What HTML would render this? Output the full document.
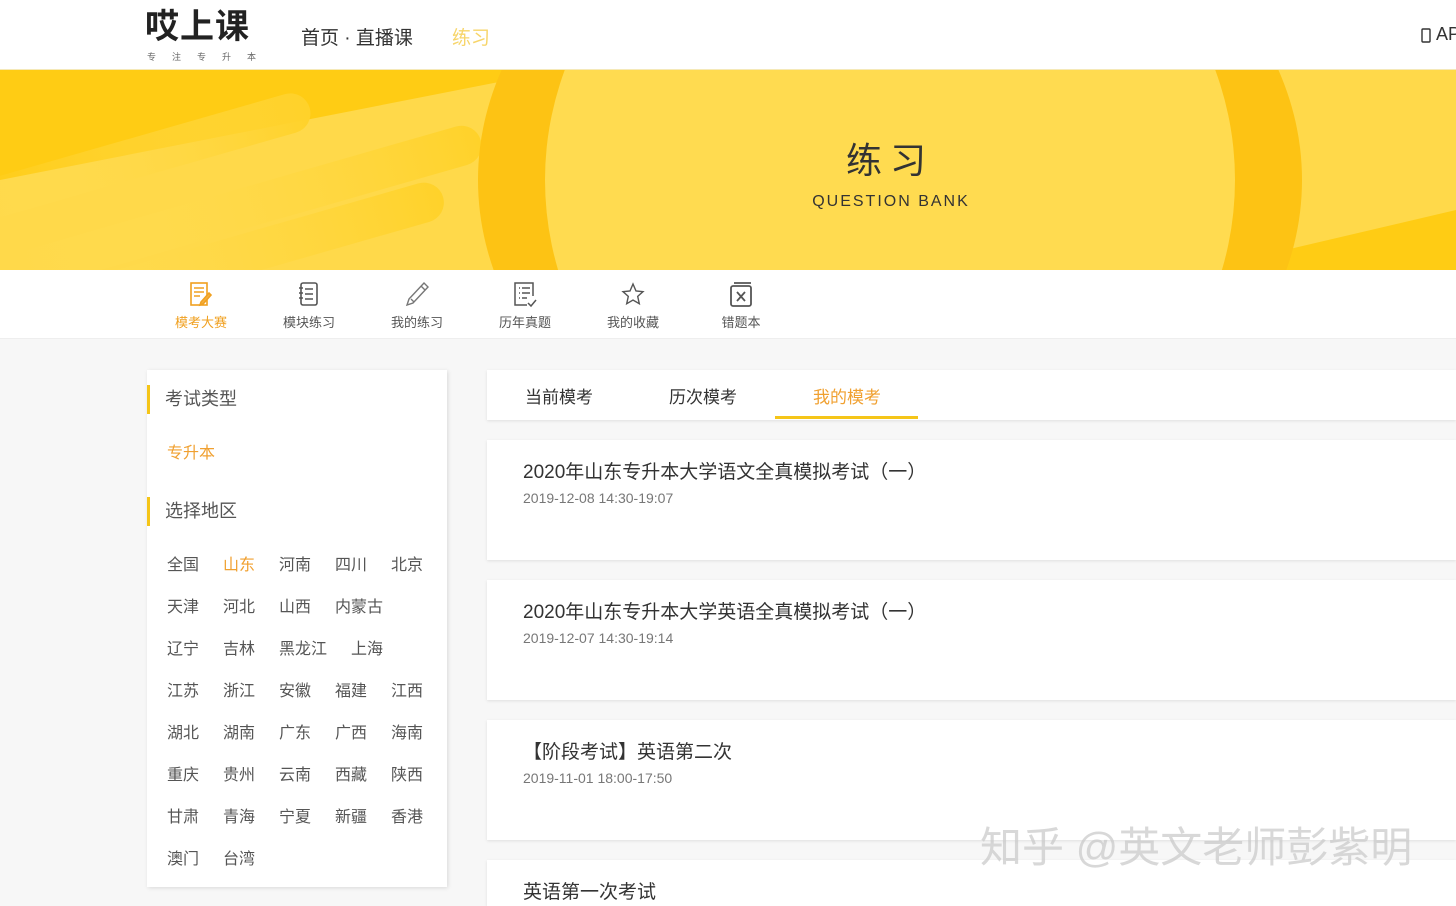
<!DOCTYPE html>
<html><head><meta charset="utf-8"><style>
*{margin:0;padding:0;box-sizing:border-box}
html,body{width:1456px;height:906px;overflow:hidden}
body{background:#f7f7f7;font-family:"Liberation Sans","Noto Sans CJK SC",sans-serif;color:#333;position:relative}
.hdr{position:absolute;left:0;top:0;width:1456px;height:70px;background:#fff;border-bottom:1px solid #f5e9b8}
.abs{position:absolute;white-space:nowrap}
.banner{position:absolute;left:0;top:70px;width:1456px;height:200px;overflow:hidden;background:#ffd94a}
.nav{position:absolute;left:0;top:270px;width:1456px;height:69px;background:#fff;border-bottom:1px solid #eee}
.nav .it{position:absolute;top:0;width:90px;text-align:center;font-size:13px;color:#555}
.nav .it svg{display:block;margin:11px auto 3px}
.side{position:absolute;left:147px;top:370px;width:300px;height:517px;background:#fff;box-shadow:1px 1px 4px rgba(0,0,0,.12)}
.ttl{position:absolute;left:0;font-size:18px;color:#555;border-left:3px solid #f5c518;padding-left:15px;height:29px;line-height:29px}
.rg{position:absolute;font-size:16px;color:#555}
.card{position:absolute;left:487px;width:969px;background:#fff;box-shadow:0 1px 3px rgba(0,0,0,.1)}
.card .t{position:absolute;left:36px;top:17px;font-size:19px;color:#333}
.card .d{position:absolute;left:36px;top:50px;font-size:14px;color:#777}
</style></head><body>
<div class="hdr">
 <div class="abs" style="left:145px;top:7px;font-size:34px;font-weight:bold;color:#222;letter-spacing:1px;line-height:40px">哎上课</div>
 <div class="abs" style="left:147px;top:50px;font-size:9px;color:#666;letter-spacing:16px">专注专升本</div>
 <div class="abs" style="left:301px;top:23px;font-size:19px;color:#333">首页 · 直播课</div>
 <div class="abs" style="left:452px;top:23px;font-size:19px;color:#f7d56a">练习</div>
 <svg class="abs" style="left:1421px;top:28px" width="10" height="15" viewBox="0 0 10 15" fill="none" stroke="#333" stroke-width="1.4"><rect x="1" y="1" width="8" height="13" rx="1"/></svg>
 <div class="abs" style="left:1436px;top:24px;font-size:18px;color:#333">AP</div>
</div>
<div class="banner">
 <svg width="1456" height="200" style="position:absolute;left:0;top:0">
  <polygon points="0,0 560,0 0,110" fill="#ffcc14"/>
  <polygon points="1456,140 1456,200 1200,200" fill="#ffcc14"/>
  <defs><linearGradient id="g" x1="0" x2="1"><stop offset="0" stop-color="#ffdf60" stop-opacity="0"/><stop offset="1" stop-color="#ffd22a"/></linearGradient></defs>
  <g transform="rotate(-16 160 60)"><rect x="-40" y="60" width="350" height="40" rx="20" fill="url(#g)"/></g>
  <g transform="rotate(-16 250 100)"><rect x="0" y="115" width="480" height="40" rx="20" fill="url(#g)"/></g>
  <g transform="rotate(-16 200 150)"><rect x="-40" y="175" width="480" height="40" rx="20" fill="url(#g)"/></g>
  <ellipse cx="890" cy="110" rx="412" ry="330" fill="#fdc314"/>
  <ellipse cx="890" cy="110" rx="345" ry="330" fill="#ffdb50"/>
 </svg>
 <div class="abs" style="left:0;width:1780px;text-align:center;top:62px;font-size:36px;color:#333;letter-spacing:8px">练习</div>
 <div class="abs" style="left:0;width:1782px;text-align:center;top:123px;font-size:16px;color:#333;letter-spacing:2px">QUESTION BANK</div>
</div>
<div class="nav">
 <div class="it" style="left:156px;color:#f0a020"><svg width="26" height="28" viewBox="0 0 26 28" fill="none" stroke="#f0a020" stroke-width="1.6"><rect x="3" y="2" width="16" height="22"/><path d="M6 7h10M6 11h10M6 15h6" /><path d="M21 12l-8 9-1 3 3-1 8-9z" fill="#f5b040"/></svg>模考大赛</div>
 <div class="it" style="left:264px"><svg width="26" height="28" viewBox="0 0 26 28" fill="none" stroke="#555" stroke-width="1.6"><rect x="5" y="2" width="16" height="22" rx="2"/><path d="M9 8h8M9 13h8M9 18h8M3 7h4M3 12h4M3 17h4"/></svg>模块练习</div>
 <div class="it" style="left:372px"><svg width="26" height="28" viewBox="0 0 26 28" fill="none" stroke="#777" stroke-width="1.4"><path d="M20 2l4 4-15 16-6 2 2-6z M17 5l4 4 M7 18l3 3"/></svg>我的练习</div>
 <div class="it" style="left:480px"><svg width="26" height="28" viewBox="0 0 26 28" fill="none" stroke="#555" stroke-width="1.5"><path d="M21 15V2H3v22h12"/><path d="M7 7h1M10 7h8M7 12h1M10 12h8M7 17h1M10 17h5M16 22l3 3 5-6"/></svg>历年真题</div>
 <div class="it" style="left:588px"><svg width="26" height="28" viewBox="0 0 26 28" fill="none" stroke="#555" stroke-width="1.4"><path d="M13 3l3 7 7 .7-5.3 4.7 1.6 7.3L13 19l-6.3 3.7 1.6-7.3L3 10.7l7-.7z"/></svg>我的收藏</div>
 <div class="it" style="left:696px"><svg width="26" height="28" viewBox="0 0 26 28" fill="none" stroke="#555" stroke-width="1.8"><rect x="3" y="5" width="20" height="20" rx="2"/><path d="M6 2h17M9 11l8 9M17 11l-8 9"/></svg>错题本</div>
</div>
<div class="side">
 <div class="ttl" style="top:15px">考试类型</div>
 <div class="rg" style="left:20px;top:69px;color:#f0a030">专升本</div>
 <div class="ttl" style="top:127px">选择地区</div>
 <div class="rg" style="left:20px;top:181px">全国</div><div class="rg" style="left:76px;top:181px;color:#f0a030">山东</div><div class="rg" style="left:132px;top:181px">河南</div><div class="rg" style="left:188px;top:181px">四川</div><div class="rg" style="left:244px;top:181px">北京</div>
 <div class="rg" style="left:20px;top:223px">天津</div><div class="rg" style="left:76px;top:223px">河北</div><div class="rg" style="left:132px;top:223px">山西</div><div class="rg" style="left:188px;top:223px">内蒙古</div>
 <div class="rg" style="left:20px;top:265px">辽宁</div><div class="rg" style="left:76px;top:265px">吉林</div><div class="rg" style="left:132px;top:265px">黑龙江</div><div class="rg" style="left:204px;top:265px">上海</div>
 <div class="rg" style="left:20px;top:307px">江苏</div><div class="rg" style="left:76px;top:307px">浙江</div><div class="rg" style="left:132px;top:307px">安徽</div><div class="rg" style="left:188px;top:307px">福建</div><div class="rg" style="left:244px;top:307px">江西</div>
 <div class="rg" style="left:20px;top:349px">湖北</div><div class="rg" style="left:76px;top:349px">湖南</div><div class="rg" style="left:132px;top:349px">广东</div><div class="rg" style="left:188px;top:349px">广西</div><div class="rg" style="left:244px;top:349px">海南</div>
 <div class="rg" style="left:20px;top:391px">重庆</div><div class="rg" style="left:76px;top:391px">贵州</div><div class="rg" style="left:132px;top:391px">云南</div><div class="rg" style="left:188px;top:391px">西藏</div><div class="rg" style="left:244px;top:391px">陕西</div>
 <div class="rg" style="left:20px;top:433px">甘肃</div><div class="rg" style="left:76px;top:433px">青海</div><div class="rg" style="left:132px;top:433px">宁夏</div><div class="rg" style="left:188px;top:433px">新疆</div><div class="rg" style="left:244px;top:433px">香港</div>
 <div class="rg" style="left:20px;top:475px">澳门</div><div class="rg" style="left:76px;top:475px">台湾</div>
</div>
<div class="card" style="top:370px;height:50px">
 <div class="abs" style="left:38px;top:13px;font-size:17px;color:#333">当前模考</div>
 <div class="abs" style="left:182px;top:13px;font-size:17px;color:#333">历次模考</div>
 <div class="abs" style="left:326px;top:13px;font-size:17px;color:#f0a030">我的模考</div>
 <div class="abs" style="left:288px;top:46px;width:143px;height:3px;background:#f5c518"></div>
</div>
<div class="card" style="top:440px;height:120px"><div class="t">2020年山东专升本大学语文全真模拟考试（一）</div><div class="d">2019-12-08 14:30-19:07</div></div>
<div class="card" style="top:580px;height:120px"><div class="t">2020年山东专升本大学英语全真模拟考试（一）</div><div class="d">2019-12-07 14:30-19:14</div></div>
<div class="card" style="top:720px;height:120px"><div class="t">【阶段考试】英语第二次</div><div class="d">2019-11-01 18:00-17:50</div></div>
<div class="card" style="top:860px;height:46px"><div class="t">英语第一次考试</div></div>
<div class="abs" style="left:980px;top:814px;font-size:42px;color:rgba(200,200,200,.7);letter-spacing:0px">知乎 @英文老师彭紫明</div>
</body></html>
